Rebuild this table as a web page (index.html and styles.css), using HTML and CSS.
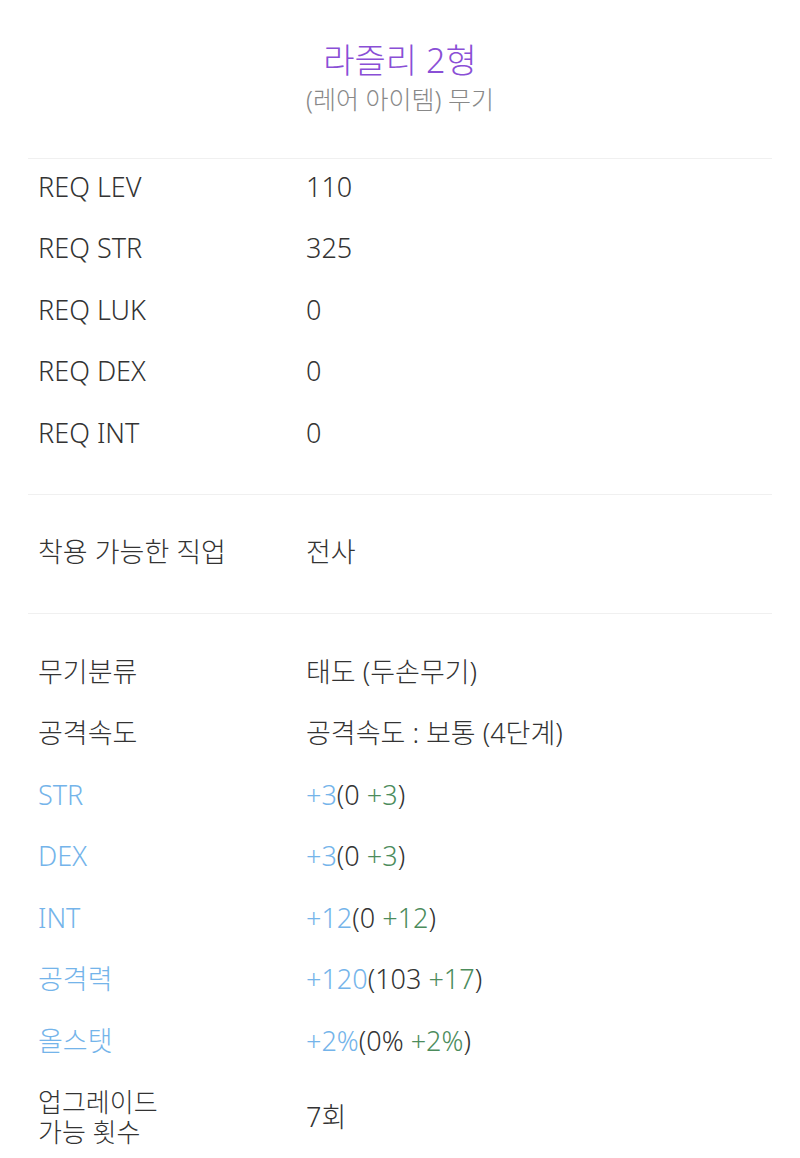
FILE: index.html
```html
<!DOCTYPE html>
<html>
<head>
  <meta charset="UTF-8">
  <title>라즐리 2형</title>
  <link rel="stylesheet" href="styles.css">
</head>
<body>

<div class="header">
  <div class="item-name">라즐리 2형</div>
  <div class="item-type">(레어 아이템) 무기</div>
</div>

<div class="section first">
  <div class="row"><span class="label">REQ LEV</span><span class="value">110</span></div>
  <div class="row"><span class="label">REQ STR</span><span class="value">325</span></div>
  <div class="row"><span class="label">REQ LUK</span><span class="value">0</span></div>
  <div class="row"><span class="label">REQ DEX</span><span class="value">0</span></div>
  <div class="row"><span class="label">REQ INT</span><span class="value">0</span></div>
</div>

<div class="section">
  <div class="row"><span class="label">착용 가능한 직업</span><span class="value">전사</span></div>
</div>

<div class="section last">
  <div class="row"><span class="label">무기분류</span><span class="value">태도 (두손무기)</span></div>
  <div class="row"><span class="label">공격속도</span><span class="value">공격속도 : 보통 (4단계)</span></div>
  <div class="row">
    <span class="label stat">STR</span>
    <span class="value"><span class="stat">+3</span>(0 <span class="bonus">+3</span>)</span>
  </div>
  <div class="row">
    <span class="label stat">DEX</span>
    <span class="value"><span class="stat">+3</span>(0 <span class="bonus">+3</span>)</span>
  </div>
  <div class="row">
    <span class="label stat">INT</span>
    <span class="value"><span class="stat">+12</span>(0 <span class="bonus">+12</span>)</span>
  </div>
  <div class="row">
    <span class="label stat">공격력</span>
    <span class="value"><span class="stat">+120</span>(103 <span class="bonus">+17</span>)</span>
  </div>
  <div class="row">
    <span class="label stat">올스탯</span>
    <span class="value"><span class="stat">+2%</span>(0% <span class="bonus">+2%</span>)</span>
  </div>
  <div class="row">
    <span class="label two-line">업그레이드<br>가능 횟수</span>
    <span class="value">7회</span>
  </div>
</div>

</body>
</html>
```

FILE: styles.css
```css
body {
  font-family: "Noto Sans", "Noto Sans CJK KR", sans-serif;
  font-weight: 300;
  color: #333;
  background: #fff;
  margin: 0 28px;
}

.header {
  text-align: center;
  padding-top: 38px;
  padding-bottom: 42px;
}

.item-name {
  color: #8a4fd6;
  font-size: 34px;
  line-height: 44px;
}

.item-type {
  color: #888;
  font-size: 25px;
  line-height: 34px;
}

.section {
  border-top: 1px solid #f0f0f0;
  padding: 27px 0 30px;
}

.section.first {
  padding-top: 0;
}

.section.first .row:first-child {
  padding-top: 12.75px;
}

.section.last {
  padding-bottom: 0;
}

.row {
  display: flex;
  align-items: center;
  padding: 15.75px 0 15.75px 10px;
  font-size: 27px;
  line-height: 30px;
}

.label {
  width: 268px;
  flex-shrink: 0;
}

.two-line {
  font-size: 26px;
}

.stat {
  color: #74b4ea;
}

.bonus {
  color: #4c8c5c;
}
```
